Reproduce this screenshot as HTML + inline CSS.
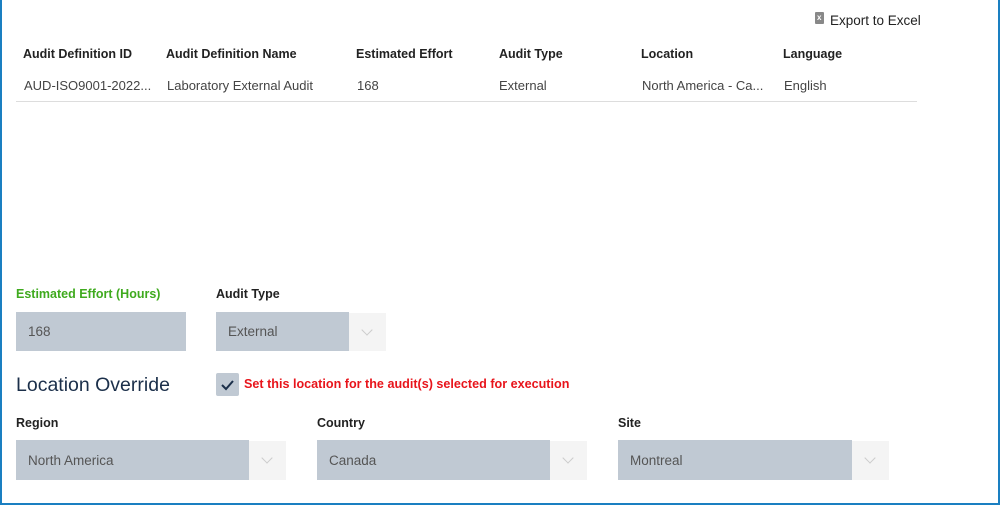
<!DOCTYPE html>
<html><head><style>
*{margin:0;padding:0;box-sizing:border-box}
body{width:1000px;height:505px;background:#fff;font-family:"Liberation Sans",sans-serif;position:relative;overflow:hidden;color:#222}
.frame{position:absolute;left:0;top:-2px;width:1000px;height:507px;border:2px solid #1a7fc1}
.a{position:absolute;white-space:nowrap}
.h{font-weight:bold;font-size:12.5px;color:#222;top:47px}
.c{font-size:13px;color:#444;top:78px}
.lbl{font-weight:bold;font-size:12.5px;color:#222}
.box{position:absolute;background:#c0c9d3;font-size:13.5px;color:#555;padding-left:12px;display:flex;align-items:center}
.dd{position:absolute;background:#f4f4f4}
.dd:after{content:"";position:absolute;left:14px;top:13px;width:7px;height:7px;border-right:1px solid #ccc;border-bottom:1px solid #ccc;transform:rotate(45deg)}
</style></head><body>
<div class="frame"></div>
<div class="a" style="left:815px;top:12px;width:9px;height:12px;background:#888;border-radius:1px"><span style="position:absolute;left:2px;top:1px;font-size:8px;color:#fff;font-weight:bold">x</span></div>
<div class="a" style="left:830px;top:13px;font-size:13.5px;color:#222">Export to Excel</div>
<div class="a h" style="left:23px">Audit Definition ID</div>
<div class="a h" style="left:166px">Audit Definition Name</div>
<div class="a h" style="left:356px">Estimated Effort</div>
<div class="a h" style="left:499px">Audit Type</div>
<div class="a h" style="left:641px">Location</div>
<div class="a h" style="left:783px">Language</div>
<div class="a c" style="left:24px">AUD-ISO9001-2022...</div>
<div class="a c" style="left:167px">Laboratory External Audit</div>
<div class="a c" style="left:357px">168</div>
<div class="a c" style="left:499px">External</div>
<div class="a c" style="left:642px">North America - Ca...</div>
<div class="a c" style="left:784px">English</div>
<div class="a" style="left:16px;top:101px;width:901px;height:1px;background:#ddd"></div>

<div class="a lbl" style="left:16px;top:287px;color:#3faa1e">Estimated Effort (Hours)</div>
<div class="a lbl" style="left:216px;top:287px">Audit Type</div>
<div class="box" style="left:16px;top:312px;width:170px;height:39px">168</div>
<div class="box" style="left:216px;top:312px;width:133px;height:39px">External</div>
<div class="dd" style="left:349px;top:313px;width:37px;height:38px"></div>

<div class="a" style="left:16px;top:374px;font-size:19.5px;color:#1b2f4a">Location Override</div>
<div class="a" style="left:216px;top:373px;width:23px;height:23px;background:#c0c9d3;border-radius:2px"><svg width="23" height="23"><path d="M6 12 L10 16 L17 8" stroke="#1b2f4a" stroke-width="2" fill="none"/></svg></div>
<div class="a" style="left:244px;top:377px;font-size:12.6px;font-weight:bold;color:#e8141b">Set this location for the audit(s) selected for execution</div>

<div class="a lbl" style="left:16px;top:416px">Region</div>
<div class="a lbl" style="left:317px;top:416px">Country</div>
<div class="a lbl" style="left:618px;top:416px">Site</div>
<div class="box" style="left:16px;top:440px;width:233px;height:40px">North America</div>
<div class="dd" style="left:249px;top:441px;width:37px;height:39px"></div>
<div class="box" style="left:317px;top:440px;width:233px;height:40px">Canada</div>
<div class="dd" style="left:550px;top:441px;width:37px;height:39px"></div>
<div class="box" style="left:618px;top:440px;width:234px;height:40px">Montreal</div>
<div class="dd" style="left:852px;top:441px;width:37px;height:39px"></div>
</body></html>
